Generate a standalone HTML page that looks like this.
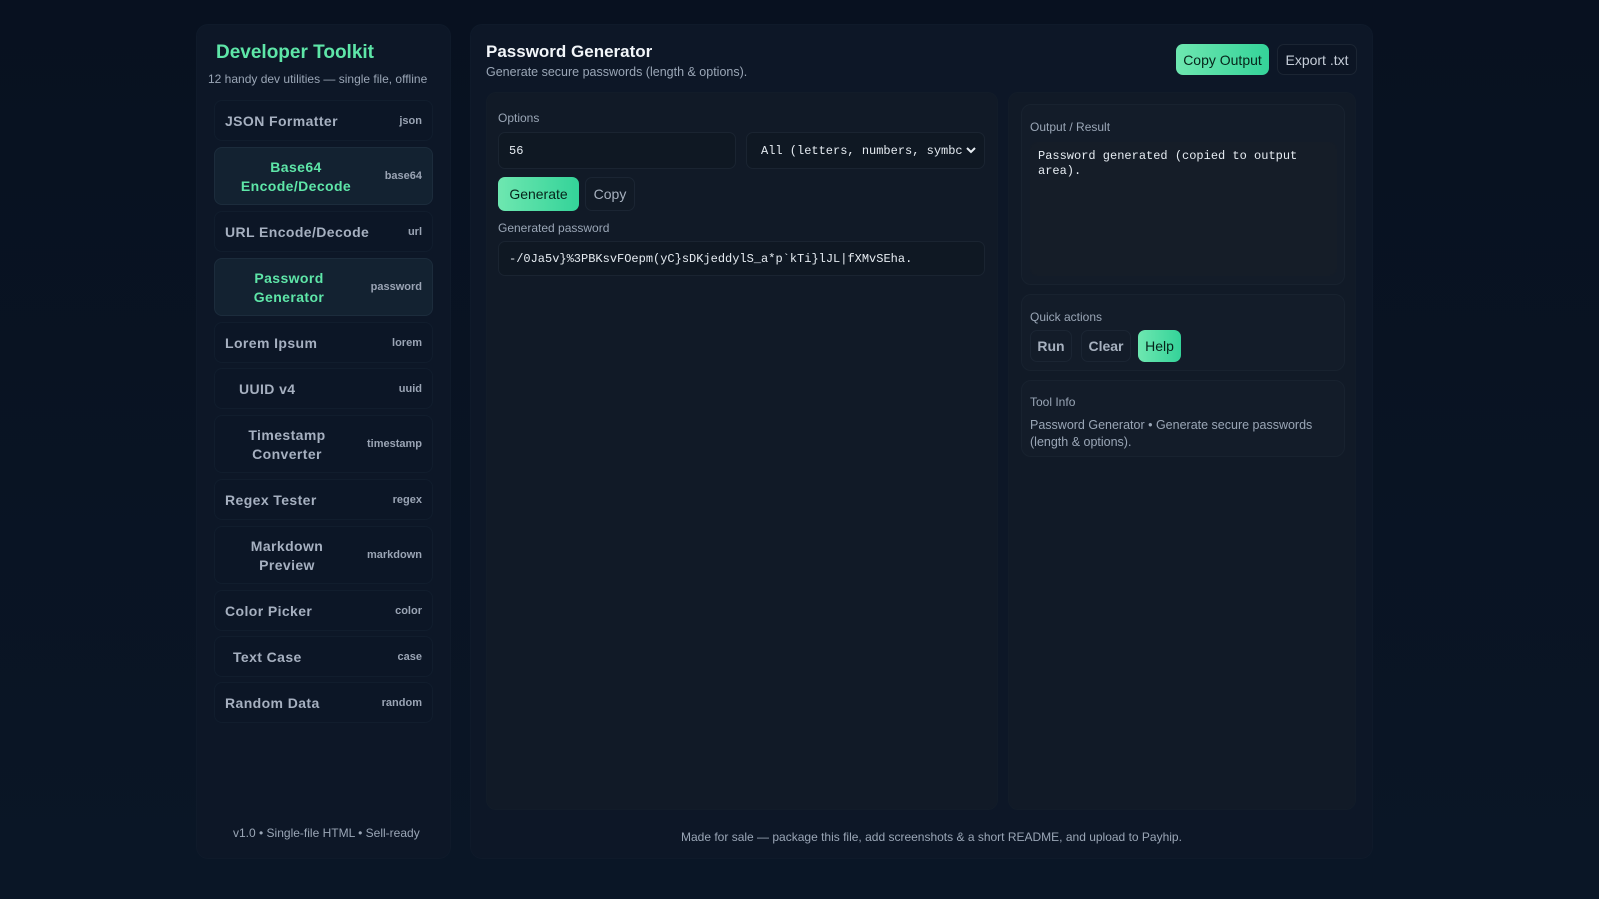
<!DOCTYPE html>
<html><head><meta charset="utf-8"><style>
*{box-sizing:border-box;margin:0;padding:0}
body{width:1599px;height:899px;background:linear-gradient(180deg,#081120 0%,#0a1626 100%);font-family:"Liberation Sans",sans-serif;position:relative;overflow:hidden;color:#cbd5e1}
.abs{position:absolute}
.panel{position:absolute;background:#0d1727;border-radius:12px;border:1px solid #0f1a2a}
.item{position:absolute;left:214px;width:219px;border:1px solid #111d2d;border-radius:8px;background:#0c1626}
.item.act{background:#132231;border-color:#1c2c3c}
.lab{position:absolute;font-weight:bold;font-size:14px;color:#a6b0c0;text-align:center;line-height:19px;letter-spacing:.4px}
.act .lab{color:#5ee6a8}
.tag{position:absolute;right:10px;font-size:11px;font-weight:bold;color:#9aa4b4}
.card{position:absolute;background:#131c29;border-radius:10px;border:1px solid #18222f}
.sm{font-size:12px;color:#9aa6b6}
.inp{position:absolute;background:#0f1823;border:1px solid #1a2431;border-radius:7px;font-family:"Liberation Mono",monospace;font-size:12px;color:#e6ecf2}
.btn{position:absolute;border-radius:7px;font-size:14px;font-weight:bold;display:flex;align-items:center;justify-content:center}
.g{background:linear-gradient(90deg,#6ee7b0,#34d399);color:#06241a}
.o{border:1px solid #1b2533;color:#a7b1bf;background:#111a26}
</style></head><body>
<div class="panel" style="left:196px;top:24px;width:255px;height:835px;"></div>
<div class="abs" style="left:216px;top:42px;font-size:19px;font-weight:bold;color:#5ee6a8">Developer Toolkit</div>
<div class="abs sm" style="left:208px;top:72px;">12 handy dev utilities — single file, offline</div>

<div class="item" style="top:100px;height:41px"><div class="lab" style="left:10px;top:11px">JSON Formatter</div><div class="tag" style="top:14px">json</div></div>
<div class="item act" style="top:147px;height:58px"><div class="lab" style="left:14px;width:134px;top:10px">Base64<br>Encode/Decode</div><div class="tag" style="top:22px">base64</div></div>
<div class="item" style="top:211px;height:41px"><div class="lab" style="left:10px;top:11px">URL Encode/Decode</div><div class="tag" style="top:14px">url</div></div>
<div class="item act" style="top:258px;height:58px"><div class="lab" style="left:24px;width:100px;top:10px">Password<br>Generator</div><div class="tag" style="top:22px">password</div></div>
<div class="item" style="top:322px;height:41px"><div class="lab" style="left:10px;top:11px">Lorem Ipsum</div><div class="tag" style="top:14px">lorem</div></div>
<div class="item" style="top:368px;height:41px"><div class="lab" style="left:24px;top:11px">UUID v4</div><div class="tag" style="top:14px">uuid</div></div>
<div class="item" style="top:415px;height:58px"><div class="lab" style="left:22px;width:100px;top:10px">Timestamp<br>Converter</div><div class="tag" style="top:22px">timestamp</div></div>
<div class="item" style="top:479px;height:41px"><div class="lab" style="left:10px;top:11px">Regex Tester</div><div class="tag" style="top:14px">regex</div></div>
<div class="item" style="top:526px;height:58px"><div class="lab" style="left:22px;width:100px;top:10px">Markdown<br>Preview</div><div class="tag" style="top:22px">markdown</div></div>
<div class="item" style="top:590px;height:41px"><div class="lab" style="left:10px;top:11px">Color Picker</div><div class="tag" style="top:14px">color</div></div>
<div class="item" style="top:636px;height:41px"><div class="lab" style="left:18px;top:11px">Text Case</div><div class="tag" style="top:14px">case</div></div>
<div class="item" style="top:682px;height:41px"><div class="lab" style="left:10px;top:11px">Random Data</div><div class="tag" style="top:14px">random</div></div>
<div class="abs sm" style="left:233px;top:826px;">v1.0 • Single-file HTML • Sell-ready</div>

<div class="panel" style="left:470px;top:24px;width:903px;height:835px;"></div>
<div class="abs" style="left:486px;top:42px;font-size:17px;font-weight:bold;color:#f1f5f9">Password Generator</div>
<div class="abs" style="left:486px;top:65px;font-size:12.5px;color:#9aa6b6">Generate secure passwords (length &amp; options).</div>
<div class="btn g" style="left:1176px;top:44px;width:93px;height:31px;font-weight:normal;font-size:14px">Copy Output</div>
<div class="btn o" style="left:1277px;top:44px;width:80px;height:31px;font-weight:normal;color:#c5cdd8;background:#0c1524">Export .txt</div>

<div class="card" style="left:486px;top:92px;width:512px;height:718px;background:#111a27;border-color:#121c29"></div>
<div class="abs sm" style="left:498px;top:111px">Options</div>
<div class="inp" style="left:498px;top:132px;width:238px;height:37px;padding:11px 10px">56</div>
<div class="inp" style="left:746px;top:132px;width:239px;height:37px;padding:11px 14px">All (letters, numbers, symbc<svg style="position:absolute;right:8px;top:14px" width="10" height="7" viewBox="0 0 10 7"><path d="M1 1L5 5L9 1" stroke="#e6ecf2" stroke-width="2" fill="none"/></svg></div>
<div class="btn g" style="left:498px;top:177px;width:81px;height:34px;font-weight:normal">Generate</div>
<div class="btn o" style="left:585px;top:177px;width:50px;height:34px;font-weight:normal">Copy</div>
<div class="abs sm" style="left:498px;top:221px">Generated password</div>
<div class="inp" style="left:498px;top:241px;width:487px;height:35px;padding:10px 10px">-/0Ja5v}%3PBKsvFOepm(yC}sDKjeddylS_a*p`kTi}lJL|fXMvSEha.</div>

<div class="card" style="left:1008px;top:92px;width:348px;height:718px;background:#111a27;border-color:#121c29"></div>
<div class="card" style="left:1021px;top:104px;width:324px;height:181px"></div>
<div class="abs sm" style="left:1030px;top:120px">Output / Result</div>
<div class="inp" style="left:1030px;top:142px;width:307px;height:134px;padding:6px 7px;background:#151d28;border-color:#151d28;line-height:15px">Password generated (copied to output<br>area).</div>
<div class="card" style="left:1021px;top:294px;width:324px;height:77px"></div>
<div class="abs sm" style="left:1030px;top:310px">Quick actions</div>
<div class="btn o" style="left:1030px;top:330px;width:42px;height:32px;background:#131c29">Run</div>
<div class="btn o" style="left:1081px;top:330px;width:50px;height:32px;background:#131c29">Clear</div>
<div class="btn g" style="left:1138px;top:330px;width:43px;height:32px;font-weight:normal">Help</div>
<div class="card" style="left:1021px;top:380px;width:324px;height:77px"></div>
<div class="abs sm" style="left:1030px;top:395px">Tool Info</div>
<div class="abs" style="left:1030px;top:417px;font-size:12.5px;color:#9aa6b6;line-height:17px;width:300px">Password Generator • Generate secure passwords (length &amp; options).</div>
<div class="abs sm" style="left:681px;top:830px">Made for sale — package this file, add screenshots &amp; a short README, and upload to Payhip.</div>
</body></html>
